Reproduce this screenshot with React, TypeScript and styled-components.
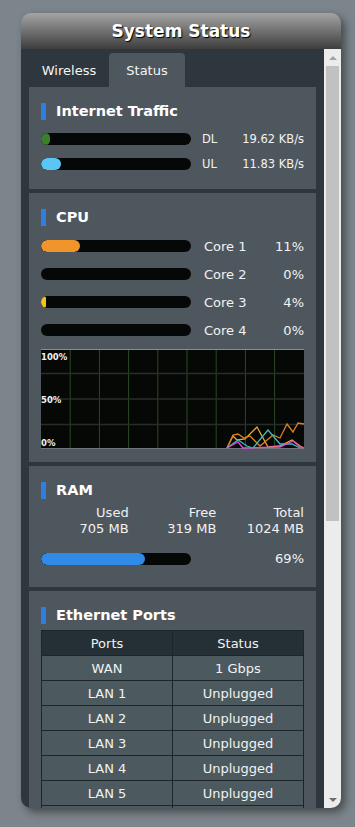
import React from "react";
import styled, { createGlobalStyle } from "styled-components";

const GlobalStyle = createGlobalStyle`
  body {
    margin: 0;
    background: #7b858b;
    font-family: "DejaVu Sans", Verdana, sans-serif;
  }
`;

const Page = styled.div`
  height: 827px;
  padding: 13px 0 0 21px;
  box-sizing: border-box;
  overflow: hidden;
`;

const Window = styled.div`
  width: 320px;
  height: 795px;
  border-radius: 10px;
  overflow: hidden;
  display: flex;
  flex-direction: column;
  box-shadow: 4px 4px 9px rgba(0, 0, 0, 0.45);
`;

const Header = styled.div`
  height: 36px;
  flex-shrink: 0;
  display: flex;
  align-items: center;
  justify-content: center;
  background: linear-gradient(#a4a4a4, #3e3e3e);
  color: #fff;
  font-size: 17px;
  font-weight: bold;
  text-shadow: 1px 1px 1px #000;
`;

const Body = styled.div`
  flex: 1;
  min-height: 0;
  display: flex;
  background: #2f373e;
`;

const Main = styled.div`
  flex: 1;
  min-width: 0;
  padding: 0 8px;
  overflow: hidden;
`;

const TabBar = styled.div`
  display: flex;
  height: 38px;
  padding-top: 4px;
  box-sizing: border-box;
`;

const Tab = styled.div<{ $active?: boolean; $w: number }>`
  width: ${(p) => p.$w}px;
  height: 34px;
  display: flex;
  align-items: center;
  justify-content: center;
  font-size: 13px;
  color: #f4f4f4;
  border-radius: 4px 4px 0 0;
  background: ${(p) => (p.$active ? "#4f575e" : "transparent")};
`;

const Stack = styled.div`
  display: flex;
  flex-direction: column;
  gap: 4px;
`;

const Panel = styled.div`
  background: #4f575e;
  padding: 16px 12px 13px;
  color: #f2f2f2;
`;

const Title = styled.div`
  display: flex;
  align-items: center;
  gap: 10px;
  height: 16px;
  margin-bottom: 7px;
  font-size: 14.5px;
  font-weight: bold;
  color: #fff;

  &::before {
    content: "";
    width: 5px;
    height: 17px;
    background: #2d7fe6;
  }
`;

const Meter = styled.div`
  width: 150px;
  height: 12px;
  flex-shrink: 0;
  border-radius: 6px;
  background: #060808;
  overflow: hidden;
`;

const Fill = styled.div<{ $color: string }>`
  height: 100%;
  border-radius: 6px;
  background: ${(p) => p.$color};
`;

const Row = styled.div<{ $h: number; $size: number }>`
  display: flex;
  align-items: center;
  height: ${(p) => p.$h}px;
  font-size: ${(p) => p.$size}px;
`;

const RowLabel = styled.span<{ $gap: number }>`
  margin-left: ${(p) => p.$gap}px;
`;

const RowValue = styled.span`
  flex: 1;
  text-align: right;
`;

const Chart = styled.svg`
  display: block;
  width: 263px;
  height: 100px;
  margin-top: 5px;
  background: #060806;
`;

const Stats = styled.div`
  display: grid;
  grid-template-columns: repeat(3, 1fr);
  font-size: 13px;
  line-height: 16px;
  text-align: right;
  margin-bottom: 6px;
`;

const PortTable = styled.table`
  width: 263px;
  margin-top: 3px;
  border-collapse: collapse;
  table-layout: fixed;
  font-size: 13px;
  text-align: center;

  th,
  td {
    width: 50%;
    height: 24px;
    padding: 0;
    border: 1px solid #1e2528;
    font-weight: normal;
  }

  th {
    background: #243036;
  }

  td {
    background: #4c5a5f;
  }
`;

const Scroll = styled.div`
  width: 17px;
  flex-shrink: 0;
  background: #ececec;
  display: flex;
  flex-direction: column;
  align-items: center;
`;

const Arrow = styled.div<{ $down?: boolean }>`
  height: 17px;
  display: flex;
  align-items: center;
  justify-content: center;

  &::after {
    content: "";
    border-left: 4px solid transparent;
    border-right: 4px solid transparent;
    ${(p) =>
      p.$down
        ? "border-top: 4px solid #6e6e6e;"
        : "border-bottom: 4px solid #a3a3a3;"}
  }
`;

const Thumb = styled.div`
  width: 13px;
  height: 455px;
  background: #c1c1c1;
`;

const Spacer = styled.div`
  flex: 1;
`;

const traffic = [
  { label: "DL", value: "19.62 KB/s", pct: 6, color: "#3b7f2a" },
  { label: "UL", value: "11.83 KB/s", pct: 13, color: "#5ac6f5" },
];

const cores = [
  { label: "Core 1", pct: 11, w: 26, color: "#f0942c" },
  { label: "Core 2", pct: 0, w: 0, color: "#f0942c" },
  { label: "Core 3", pct: 4, w: 3, color: "#f5c21b" },
  { label: "Core 4", pct: 0, w: 0, color: "#f0942c" },
];

const ports = [
  ["WAN", "1 Gbps"],
  ["LAN 1", "Unplugged"],
  ["LAN 2", "Unplugged"],
  ["LAN 3", "Unplugged"],
  ["LAN 4", "Unplugged"],
  ["LAN 5", "Unplugged"],
  ["", ""],
];

const lines = [
  {
    color: "#e8a82a",
    pts: "186,99 192,87 196,91 204,90 216,78 227,98 239,97 251,91 259,97 263,99",
  },
  {
    color: "#e07e22",
    pts: "186,99 192,86 197,85 203,89 209,87 219,97 232,86 239,89 246,75 252,83 257,74 263,75",
  },
  {
    color: "#3fbcc0",
    pts: "186,99 197,91 206,97 212,99 227,81 239,95 251,95 259,99",
  },
  {
    color: "#e046e0",
    pts: "186,99 197,93 202,99 239,98 252,92 259,98 263,99",
  },
];

function CpuChart() {
  const cols = Array.from({ length: 8 }, (_, i) => (i + 1) * 29.2);
  return (
    <Chart viewBox="0 0 263 100">
      {cols.map((x) => (
        <line key={x} x1={x} y1={0} x2={x} y2={100} stroke="#2b4a24" strokeWidth={1} />
      ))}
      {[24.5, 50, 75.5].map((y) => (
        <line key={y} x1={0} y1={y} x2={263} y2={y} stroke="#2a2c2c" strokeWidth={1.5} />
      ))}
      <line x1={0} y1={0.5} x2={263} y2={0.5} stroke="#8a8e90" strokeWidth={1} />
      <line x1={0} y1={99.5} x2={263} y2={99.5} stroke="#6f7477" strokeWidth={1} />
      {lines.map((l) => (
        <polyline key={l.color} points={l.pts} fill="none" stroke={l.color} strokeWidth={1.3} />
      ))}
      <g fill="#f2f2f2" fontSize="8.5" fontWeight="bold" fontFamily="DejaVu Sans, sans-serif">
        <text x={0} y={11}>100%</text>
        <text x={0} y={54}>50%</text>
        <text x={0} y={97}>0%</text>
      </g>
    </Chart>
  );
}

export default function App() {
  return (
    <>
      <GlobalStyle />
      <Page>
        <Window>
          <Header>System Status</Header>
          <Body>
            <Main>
              <TabBar>
                <Tab $w={80}>Wireless</Tab>
                <Tab $w={76} $active>
                  Status
                </Tab>
              </TabBar>
              <Stack>
                <Panel>
                  <Title>Internet Traffic</Title>
                  {traffic.map((t) => (
                    <Row key={t.label} $h={25} $size={11.5}>
                      <Meter>
                        <Fill $color={t.color} style={{ width: `${t.pct}%` }} />
                      </Meter>
                      <RowLabel $gap={11}>{t.label}</RowLabel>
                      <RowValue>{t.value}</RowValue>
                    </Row>
                  ))}
                </Panel>
                <Panel>
                  <Title>CPU</Title>
                  {cores.map((c) => (
                    <Row key={c.label} $h={28} $size={13}>
                      <Meter>
                        <Fill $color={c.color} style={{ width: `${c.w}%` }} />
                      </Meter>
                      <RowLabel $gap={13}>{c.label}</RowLabel>
                      <RowValue>{c.pct}%</RowValue>
                    </Row>
                  ))}
                  <CpuChart />
                </Panel>
                <Panel>
                  <Title>RAM</Title>
                  <Stats>
                    <span>Used</span>
                    <span>Free</span>
                    <span>Total</span>
                    <span>705 MB</span>
                    <span>319 MB</span>
                    <span>1024 MB</span>
                  </Stats>
                  <Row $h={31} $size={13}>
                    <Meter>
                      <Fill $color="#2f8ae8" style={{ width: "69%" }} />
                    </Meter>
                    <RowValue>69%</RowValue>
                  </Row>
                </Panel>
                <Panel>
                  <Title>Ethernet Ports</Title>
                  <PortTable>
                    <thead>
                      <tr>
                        <th>Ports</th>
                        <th>Status</th>
                      </tr>
                    </thead>
                    <tbody>
                      {ports.map(([p, s], i) => (
                        <tr key={i}>
                          <td>{p}</td>
                          <td>{s}</td>
                        </tr>
                      ))}
                    </tbody>
                  </PortTable>
                </Panel>
              </Stack>
            </Main>
            <Scroll>
              <Arrow />
              <Thumb />
              <Spacer />
              <Arrow $down />
            </Scroll>
          </Body>
        </Window>
      </Page>
    </>
  );
}
